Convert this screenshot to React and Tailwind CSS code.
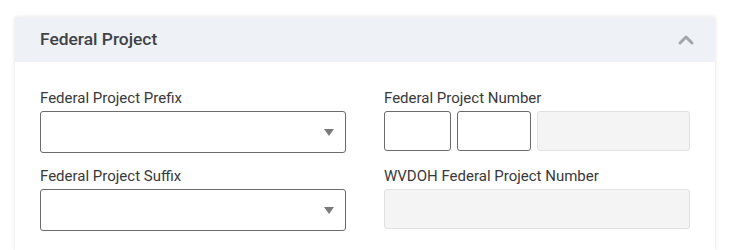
import { ChevronUp } from 'lucide-react'

function Caret() {
  return (
    <svg width="10" height="7" viewBox="0 0 10 7" className="text-[#7a7a7a]">
      <path d="M0 0h10L5 7z" fill="currentColor" />
    </svg>
  )
}

function SelectBox() {
  return (
    <div className="h-[42px] w-full rounded-[3px] border border-[#6b6b6b] bg-white flex items-center justify-end pr-[11px]">
      <Caret />
    </div>
  )
}

function Field({ label, children }) {
  return (
    <div className="flex flex-col">
      <label className="text-[15px] font-normal leading-[18px] text-[#393939] mb-[4px] pt-[1px]">{label}</label>
      {children}
    </div>
  )
}

export default function App() {
  return (
    <div className="min-h-screen bg-white pt-[17px] pl-[15px] pr-[18px] font-['Roboto',sans-serif]">
      <div className="bg-white shadow-[0_0_4px_rgba(0,0,0,0.12)]">
        <div className="h-[45px] bg-[#eef1f5] flex items-center justify-between pl-[25px] pr-[17px]">
          <h2 className="text-[17.4px] font-medium text-[#3f4247]">Federal Project</h2>
          <ChevronUp className="w-[24px] h-[24px] text-[#a3a6aa]" strokeWidth={3} />
        </div>
        <div className="grid grid-cols-2 gap-x-[38px] gap-y-[13px] px-[25px] pt-[26px] pb-[20px]">
          <Field label="Federal Project Prefix">
            <SelectBox />
          </Field>
          <Field label="Federal Project Number">
            <div className="flex gap-[6px]">
              <div className="h-[40px] w-[67px] rounded-[3px] border border-[#6b6b6b] bg-white" />
              <div className="h-[40px] w-[74px] rounded-[3px] border border-[#6b6b6b] bg-white" />
              <div className="h-[40px] flex-1 rounded-[3px] border border-[#e0e0e0] bg-[#f4f4f4]" />
            </div>
          </Field>
          <Field label="Federal Project Suffix">
            <SelectBox />
          </Field>
          <Field label="WVDOH Federal Project Number">
            <div className="h-[40px] w-full rounded-[3px] border border-[#e0e0e0] bg-[#f4f4f4]" />
          </Field>
        </div>
      </div>
    </div>
  )
}
